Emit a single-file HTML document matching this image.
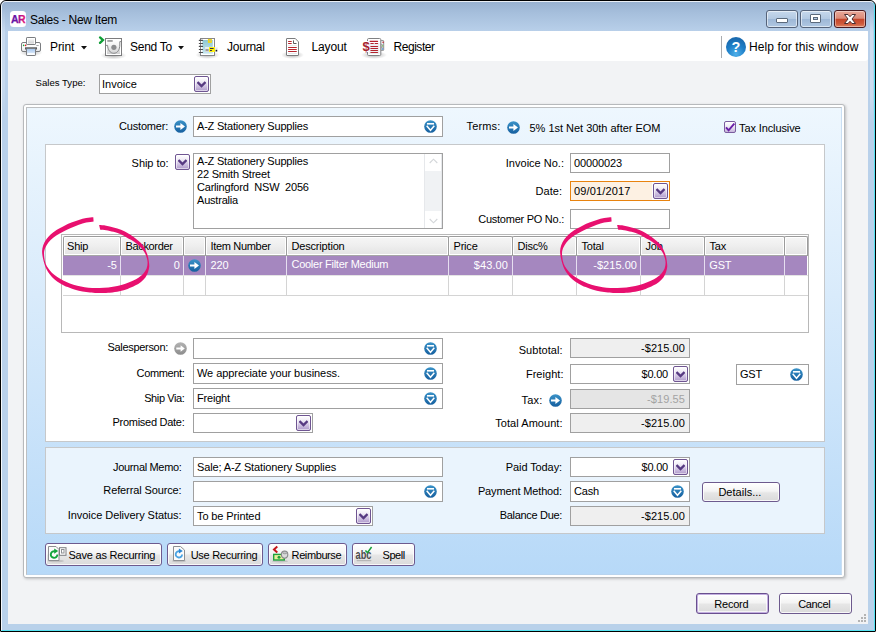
<!DOCTYPE html>
<html lang="en">
<head>
<meta charset="utf-8">
<title>Sales - New Item</title>
<style>
*{box-sizing:border-box;margin:0;padding:0}
html,body{width:876px;height:632px;overflow:hidden;background:#fff}
body{font-family:"Liberation Sans",sans-serif;font-size:12px;color:#000;position:relative}
.abs{position:absolute}
#win{position:absolute;left:0;top:0;width:876px;height:632px;border:1px solid #000;border-radius:6px 6px 1px 1px;
 background:linear-gradient(180deg,#98b1d0 0px,#a6bfdc 12px,#b9d0ea 31px,#b9d1ea 100%);overflow:hidden}
#glow{position:absolute;left:0;top:0;width:874px;height:630px;border:1px solid rgba(255,255,255,.85);border-top-color:rgba(255,255,255,.8);border-radius:5px 5px 0 0;border-right-color:#55e3f2;border-bottom-color:#55e3f2}
#client{position:absolute;left:7px;top:30px;width:860px;height:593px;background:#f2f3f5}
#toolbar{position:absolute;left:0;top:0;width:860px;height:30px;background:#fff;border-radius:1px 1px 3px 3px}
.tt{position:absolute;font-size:12px;color:#000;white-space:nowrap;line-height:16px}
.l{position:absolute;white-space:nowrap;font-size:11.5px;line-height:14px;text-align:right;color:#000}
.t{position:absolute;white-space:nowrap;font-size:11.5px;line-height:14px;color:#000}
.f{position:absolute;background:#fff;border:1px solid #a0a0a0}
.f.g{background:#efefef}
.f span{position:absolute;white-space:nowrap;font-size:11.5px;line-height:14px;top:2px}
.f span.r{right:4px}
.f span.lf{left:3px}
#outer{position:absolute;left:23px;top:104px;width:822px;height:474px;border:1px solid #b7b9bc;border-radius:3px;background:#fff;box-shadow:1px 1px 3px rgba(0,0,0,.22)}
#outer .in{position:absolute;left:2px;top:2px;right:2px;bottom:2px;border:1px solid #bdbfc2;border-right-color:#c9def3;border-bottom-color:#b9d4ee;background:linear-gradient(180deg,#eef7fe 0%,#d9ebfb 40%,#b7d9f8 100%)}
#p1{position:absolute;left:45px;top:144px;width:780px;height:298px;background:#fff;border:1px solid #c6c8ca}
#p2{position:absolute;left:45px;top:447px;width:780px;height:87px;background:#eaf4fd;border:1px solid #c6c8ca}

.wb{border:1px solid #55637a;border-radius:3px;background:linear-gradient(180deg,#c6d8ec 0%,#b3c9e2 48%,#9db7d6 50%,#b0c8e3 100%);box-shadow:inset 0 0 0 1px rgba(255,255,255,.55)}
.wb.cl{border-color:#4a1a20;background:linear-gradient(180deg,#e9a99a 0%,#dc8a78 46%,#c4452a 50%,#cf5a3c 80%,#de8464 100%);box-shadow:inset 0 0 0 1px rgba(255,255,255,.4)}

.l,.t,.f span{font-size:11px;letter-spacing:-0.2px}
.db{position:absolute;width:15px;height:16px;border:1px solid #6f5592;border-radius:2px;background:linear-gradient(180deg,#ffffff 0%,#f2eef7 30%,#d3c6e4 62%,#af9acb 100%);box-shadow:inset 0 0 0 1px rgba(255,255,255,.55)}
.db svg{position:absolute;left:2px;top:4px}
.ic{position:absolute;width:13px;height:13px}
.cb{position:absolute;width:12px;height:12px;border:1px solid #7a5c9e;background:linear-gradient(180deg,#ffffff 0%,#efe9f5 45%,#c7b6dc 100%);border-radius:2px}


#tbl{position:absolute;left:61px;top:234px;width:748px;height:99px;border:1px solid #b8b8b8;background:#fff;overflow:hidden}
#tbl .h{position:absolute;top:1px;height:20px;border:1px solid #9c9c9c;border-bottom-color:#a6a6a6;background:linear-gradient(180deg,#f6f6f6 0%,#efefef 45%,#e3e3e3 100%);box-shadow:inset 1px 1px 0 #fff,inset -1px -1px 0 #fff;font-size:11px;letter-spacing:-0.2px;line-height:14px;padding:2px 0 0 4.5px;white-space:nowrap;border-radius:2px 2px 0 0}
#tbl .r1{position:absolute;left:1px;top:21px;width:744px;height:19px;background:#a587bf}
#tbl .c{position:absolute;color:#fff;font-size:11px;letter-spacing:-0.2px;line-height:14px;white-space:nowrap}
#tbl .v{position:absolute;top:21px;width:1px;height:40px;background:linear-gradient(180deg,#e6def0 0,#e6def0 19px,#d4d4d4 19px,#d4d4d4 40px)}
#tbl .hl{position:absolute;left:1px;top:60px;width:745px;height:1px;background:#d4d4d4}
#tbl .hl0{position:absolute;left:1px;top:40px;width:745px;height:1px;background:#e4e4e4}

.btn{position:absolute;border:1px solid #6d5a8e;border-radius:3px;background:linear-gradient(180deg,#ffffff 0%,#f4f4f4 45%,#e6e6e6 55%,#dadada 100%);box-shadow:inset 0 0 0 1px rgba(255,255,255,.8)}
.btn span{position:absolute;white-space:nowrap;font-size:11px;line-height:14px}
.btn.def{border-color:#694f8f;box-shadow:inset 0 0 0 1px #c3afe0,inset 0 0 0 2px rgba(255,255,255,.7)}

.sb{position:absolute;left:230px;top:0;width:18px;height:74px;border-left:1px solid #e6e8eb;border-right:1px solid #e6e8eb;background:linear-gradient(180deg,#fff 0,#fff 17px,#f0f2f4 17px,#f0f2f4 57px,#fff 57px,#fff 74px)}
.sb svg{position:absolute;left:4px}
</style>
</head>
<body>
<div id="win">
 <div id="glow"></div>
 <div id="client">
  <div id="toolbar"></div>
 </div>
</div>
<div id="outer"><div class="in"></div></div>
<div id="p1"></div>
<div id="p2"></div>

<!-- title bar -->
<svg class="abs" style="left:10px;top:11px" width="16" height="16" viewBox="0 0 16 16">
 <defs><linearGradient id="arg" x1="0" x2="1" y1="0" y2="0"><stop offset="0" stop-color="#5a12a6"/><stop offset=".42" stop-color="#7413a3"/><stop offset=".62" stop-color="#b3158d"/><stop offset="1" stop-color="#ee1470"/></linearGradient></defs>
 <rect x="0" y="0" width="16" height="16" rx="3.500" fill="#fff"/>
 <text x="8" y="12.2" text-anchor="middle" font-family="Liberation Sans, sans-serif" font-weight="bold" font-size="10.5" letter-spacing="-0.6" fill="url(#arg)" stroke="url(#arg)" stroke-width=".25">AR</text>
</svg>
<div class="abs" style="left:30px;top:12px;font-size:12px;line-height:16px;white-space:nowrap;letter-spacing:-0.27px">Sales - New Item</div>
<div class="wb abs" style="left:766px;top:10px;width:32px;height:18px"><i style="position:absolute;left:9px;top:7px;width:12px;height:5px;background:#fff;border:1px solid #5b6a7c;border-radius:1px"></i></div>
<div class="wb abs" style="left:800px;top:10px;width:32px;height:18px"><i style="position:absolute;left:9px;top:3px;width:11px;height:9px;border:1px solid #5b6a7c;background:#fff;border-radius:1px"></i><i style="position:absolute;left:12px;top:6px;width:5px;height:3px;border:1px solid #5b6a7c;background:#b5cbe3"></i></div>
<div class="wb cl abs" style="left:834px;top:10px;width:32px;height:18px">
 <svg style="position:absolute;left:8px;top:2px" width="14" height="12" viewBox="0 0 14 12"><path d="M1.5 1.5 L5 1.5 L7 3.7 L9 1.5 L12.5 1.5 L9 6 L12.5 10.5 L9 10.5 L7 8.3 L5 10.5 L1.5 10.5 L5 6 Z" fill="#fff" stroke="#4a2f33" stroke-width="1" stroke-linejoin="round"/></svg>
</div>
<div class="abs" style="left:2px;top:8px;width:3px;height:110px;background:linear-gradient(180deg,rgba(255,255,255,.0) 0,rgba(255,255,255,.22) 25px,rgba(255,255,255,.2) 70%,rgba(255,255,255,0) 100%)"></div>
<div class="abs" style="left:870px;top:8px;width:3px;height:115px;background:linear-gradient(180deg,rgba(255,255,255,.0) 0,rgba(255,255,255,.3) 25px,rgba(255,255,255,.28) 75%,rgba(255,255,255,0) 100%)"></div>
<!--TITLE-->

<!-- toolbar -->
<svg class="abs" style="left:20px;top:36px" width="23" height="22" viewBox="0 0 23 22">
 <defs><linearGradient id="pg1" x1="0" x2="0" y1="0" y2="1"><stop offset="0" stop-color="#ffffff"/><stop offset=".55" stop-color="#fbfbfb"/><stop offset="1" stop-color="#e3e4e6"/></linearGradient>
 <linearGradient id="pg2" x1="0" x2="0" y1="0" y2="1"><stop offset="0" stop-color="#9fc3ee"/><stop offset=".7" stop-color="#dbe9f9"/><stop offset="1" stop-color="#ffffff"/></linearGradient>
 <linearGradient id="pg3" x1="0" x2="0" y1="0" y2="1"><stop offset="0" stop-color="#f4f4f4"/><stop offset="1" stop-color="#cfd0d2"/></linearGradient>
 <radialGradient id="psh" cx=".5" cy=".5" r=".5"><stop offset="0" stop-color="#000" stop-opacity=".28"/><stop offset="1" stop-color="#000" stop-opacity="0"/></radialGradient></defs>
 <ellipse cx="11" cy="16.500" rx="11.500" ry="4" fill="url(#psh)"/>
 <rect x="1.500" y="6.500" width="19" height="9" rx="1.500" fill="url(#pg1)" stroke="#7b7d80"/>
 <rect x="6.500" y="1.500" width="9" height="7" rx=".6" fill="#fff" stroke="#7b7d80"/>
 <rect x="8" y="3.200" width="6" height="4.300" fill="url(#pg3)"/>
 <rect x="5" y="11.300" width="12" height="2.200" fill="#55575a"/>
 <rect x="6.500" y="12.500" width="9" height="7" rx=".6" fill="url(#pg2)" stroke="#7b7d80"/>
 <rect x="7.500" y="17" width="7" height="2" fill="#fff" opacity=".8"/>
 <circle cx="3.600" cy="9.400" r=".8" fill="#18a83a"/><circle cx="5.600" cy="9.400" r=".8" fill="#e01b1b"/>
 <rect x="16.300" y="9" width="2.400" height="1" fill="#a6a8ab"/>
</svg>
<div class="tt" style="left:50px;top:39px;letter-spacing:-0.07px">Print</div>
<svg class="abs" style="left:81px;top:46px" width="6" height="4" viewBox="0 0 6 4"><path d="M0 0 H6 L3 3.600 Z" fill="#111"/></svg>
<svg class="abs" style="left:97px;top:35px" width="30" height="25" viewBox="0 0 30 25">
 <defs><linearGradient id="sg1" x1="0" x2="0" y1="0" y2="1"><stop offset="0" stop-color="#ffffff"/><stop offset=".35" stop-color="#f4f4f4"/><stop offset="1" stop-color="#cfcfd0"/></linearGradient>
 <radialGradient id="ssh" cx=".5" cy=".5" r=".5"><stop offset="0" stop-color="#000" stop-opacity=".3"/><stop offset="1" stop-color="#000" stop-opacity="0"/></radialGradient></defs>
 <ellipse cx="16.500" cy="20.500" rx="13" ry="4" fill="url(#ssh)"/>
 <path d="M3 2.400 L6 5.100 L3 7.900" fill="none" stroke="#0e9e35" stroke-width="2.300" stroke-linecap="round" stroke-linejoin="miter"/>
 <rect x="8.500" y="3.500" width="16" height="17" fill="#fff" stroke="#7c7c7e"/>
 <rect x="10" y="5" width="13" height="14" fill="url(#sg1)"/>
 <rect x="10.300" y="5.300" width="5.400" height="1.300" fill="#77787a"/>
 <path d="M9 10.400 H10.600 C10.800 14.500 13 18.300 16.800 18.300 C20.600 18.300 22.800 14.500 22.800 10 V6.600 H24" fill="none" stroke="#88898b" stroke-width="1"/>
 <circle cx="16.900" cy="12.300" r="2.600" fill="#8b8c8e"/>
</svg>
<div class="tt" style="left:130px;top:39px;letter-spacing:-0.26px">Send To</div>
<svg class="abs" style="left:178px;top:46px" width="6" height="4" viewBox="0 0 6 4"><path d="M0 0 H6 L3 3.600 Z" fill="#111"/></svg>
<svg class="abs" style="left:196px;top:35px" width="26" height="25" viewBox="0 0 26 25">
 <defs><linearGradient id="jg" x1="0" x2="0" y1="0" y2="1"><stop offset="0" stop-color="#8cc6d3"/><stop offset="1" stop-color="#c9e8f0"/></linearGradient>
 <linearGradient id="jg2" x1="0" x2="0" y1="0" y2="1"><stop offset="0" stop-color="#f4f4f4"/><stop offset="1" stop-color="#d2d3d5"/></linearGradient>
 <radialGradient id="jsh" cx=".5" cy=".5" r=".5"><stop offset="0" stop-color="#000" stop-opacity=".3"/><stop offset="1" stop-color="#000" stop-opacity="0"/></radialGradient></defs>
 <ellipse cx="11.500" cy="20" rx="12" ry="4" fill="url(#jsh)"/>
 <rect x="4.500" y="3.500" width="14" height="17" fill="#fff" stroke="#868789"/>
 <rect x="6.400" y="5" width="10.400" height="13.700" fill="url(#jg)"/>
 <g stroke="#4d4e50" stroke-width="1.100" stroke-linecap="round"><path d="M3.300 5.400 H6.600 M3.300 8.500 H6.600 M3.300 11.400 H6.600 M3.300 14.500 H6.600 M3.300 17.500 H6.600"/></g>
 <rect x="11.900" y="3.900" width="4" height="4" fill="#efd61c"/>
 <rect x="13.300" y="4.800" width="1.500" height="1.200" fill="#b9b49a"/>
 <rect x="9.100" y="12.100" width="12.600" height="4.800" fill="url(#jg2)"/>
 <rect x="9.600" y="14.500" width="3" height="1" fill="#55565a"/>
 <rect x="13" y="12.100" width="6" height="4.800" fill="#fff200"/>
 <rect x="14" y="13" width="3.600" height="1" fill="#2b2b55"/><rect x="14" y="15" width="1.900" height="1" fill="#2b2b55"/>
 <circle cx="20.400" cy="15.600" r=".85" fill="#1b1b1b"/>
</svg>
<div class="tt" style="left:227px;top:39px;letter-spacing:-0.24px">Journal</div>
<svg class="abs" style="left:282px;top:35px" width="24" height="25" viewBox="0 0 24 25">
 <defs><radialGradient id="lsh" cx=".5" cy=".5" r=".5"><stop offset="0" stop-color="#000" stop-opacity=".3"/><stop offset="1" stop-color="#000" stop-opacity="0"/></radialGradient></defs>
 <ellipse cx="10.500" cy="20" rx="11.500" ry="4" fill="url(#lsh)"/>
 <path d="M4.700 3.500 H13.300 L16.500 6.900 V20 Q16.500 20.500 16 20.500 H5 Q4.500 20.500 4.500 20 V3.700 Z" fill="#fff" stroke="#7b7c7e" stroke-width="1"/>
 <path d="M11.500 5.400 V8.500 H14.500" fill="none" stroke="#5b5c5e" stroke-width="1"/>
 <g fill="#b8262e"><rect x="6" y="6" width="3.800" height="1.100" rx=".5"/><rect x="6" y="8" width="3.800" height="1.100" rx=".5"/><rect x="6" y="12" width="8.900" height="1.100" rx=".5"/><rect x="6" y="14" width="8.900" height="1.100" rx=".5"/><rect x="6" y="16" width="8.900" height="1.100" rx=".5"/></g>
 <g fill="#e3e6e8"><rect x="6" y="10.200" width="8.900" height=".9"/><rect x="6" y="18" width="8.900" height=".9"/></g>
</svg>
<div class="tt" style="left:311.500px;top:39px;letter-spacing:-0.13px">Layout</div>
<svg class="abs" style="left:360px;top:35px" width="28" height="25" viewBox="0 0 28 25">
 <defs><radialGradient id="rsh" cx=".5" cy=".5" r=".5"><stop offset="0" stop-color="#000" stop-opacity=".3"/><stop offset="1" stop-color="#000" stop-opacity="0"/></radialGradient></defs>
 <ellipse cx="14" cy="20" rx="13" ry="4" fill="url(#rsh)"/>
 <rect x="20.500" y="5.500" width="3.200" height="10" rx=".8" fill="#f4f4f5" stroke="#8b8c8e"/>
 <rect x="21.500" y="9.300" width="1.600" height="2.600" fill="#fff" stroke="#9a9b9d" stroke-width=".5"/><rect x="21.500" y="12.600" width="1.600" height="2.600" fill="#fff" stroke="#9a9b9d" stroke-width=".5"/>
 <circle cx="23.100" cy="7.300" r=".8" fill="#c5202a"/><rect x="22.200" y="10" width="1" height="1.600" fill="#6fbf5a"/><rect x="22.200" y="13.200" width="1" height="1.600" fill="#2f86d6"/>
 <rect x="7.500" y="3.500" width="13.300" height="17" rx="1.200" fill="#fff" stroke="#808183"/>
 <rect x="8.500" y="8" width="11" height="11" fill="#eef0f1"/>
 <g fill="#b3242e"><rect x="9.300" y="5.800" width="8.800" height="1.100" rx=".5"/><rect x="10.300" y="8" width="3.500" height="1.100" rx=".5"/><rect x="14.600" y="8" width="3.500" height="1.100" rx=".5"/><rect x="10.300" y="10.900" width="7.800" height="1.100" rx=".5"/><rect x="10.300" y="13" width="7.800" height="1.100" rx=".5"/><rect x="10.300" y="15" width="7.800" height="1.100" rx=".5"/><rect x="10.300" y="17" width="7.800" height="1.100" rx=".5"/></g>
 <rect x="6.500" y="6" width="3" height="11" fill="#fff"/>
 <text x="6.200" y="15.700" text-anchor="middle" font-family="Liberation Sans, sans-serif" font-weight="bold" font-size="13" fill="#a6232f">$</text>
</svg>
<div class="tt" style="left:393.500px;top:39px;letter-spacing:-0.46px">Register</div>
<div class="abs" style="left:721px;top:36px;width:1px;height:22px;background:#a9acb0"></div>
<svg class="abs" style="left:726px;top:37px" width="20" height="20" viewBox="0 0 20 20">
 <defs><radialGradient id="hg" cx=".5" cy=".85" r=".75"><stop offset="0" stop-color="#4fb0ea"/><stop offset=".6" stop-color="#1e7fc8"/><stop offset="1" stop-color="#1a6bb0"/></radialGradient></defs>
 <circle cx="10" cy="10" r="10" fill="url(#hg)"/>
 <text x="10" y="15.200" text-anchor="middle" font-family="Liberation Sans, sans-serif" font-weight="bold" font-size="14.500" fill="#fff">?</text>
</svg>
<div class="tt" style="left:749px;top:39px;letter-spacing:0.11px">Help for this window</div>
<!--TOOLBAR-->

<svg width="0" height="0" style="position:absolute">
 <defs>
  <linearGradient id="bl" x1="0" x2="0" y1="0" y2="1"><stop offset="0" stop-color="#3b93c8"/><stop offset="1" stop-color="#155f9f"/></linearGradient>
  <linearGradient id="gr" x1="0" x2="0" y1="0" y2="1"><stop offset="0" stop-color="#b4b4b4"/><stop offset="1" stop-color="#8c8c8c"/></linearGradient>
  <symbol id="arr" viewBox="0 0 13 13"><circle cx="6.500" cy="6.500" r="6.300" fill="url(#bl)"/><path d="M2 5.500 H6.400 V2.900 L11 6.500 L6.400 10.100 V7.500 H2 Z" fill="#fff"/></symbol>
  <symbol id="arrg" viewBox="0 0 13 13"><circle cx="6.500" cy="6.500" r="6.300" fill="url(#gr)"/><path d="M2.300 5.600 H6.600 V3.200 L10.800 6.500 L6.600 9.800 V7.400 H2.300 Z" fill="#fff"/></symbol>
  <symbol id="dd" viewBox="0 0 13 13"><circle cx="6.500" cy="6.500" r="6.300" fill="url(#bl)"/><path d="M3 3 H10 V4.600 H3 Z" fill="#fff"/><path d="M2.700 5.800 L6.500 10.300 L10.300 5.800" fill="none" stroke="#fff" stroke-width="1.500" stroke-linejoin="miter"/></symbol>
  <symbol id="chev" viewBox="0 0 9 7"><path d="M0.500 1 L4.500 5 L8.500 1" fill="none" stroke="#573a82" stroke-width="2.300" stroke-linejoin="miter"/></symbol>
 </defs>
</svg>
<div class="l" style="right:790.5px;top:76px;font-size:9.6px;letter-spacing:0">Sales Type:</div>
<div class="f " style="left:99px;top:74px;width:112px;height:20px;"><span class="lf" style="left:2px;letter-spacing:0.02px">Invoice</span></div>
<div class="db" style="left:194px;top:76px"><svg width="9" height="7"><use href="#chev"/></svg></div>
<div class="l" style="right:708px;top:119px;">Customer:</div>
<svg class="ic" style="left:174.0px;top:120.0px"><use href="#arr"/></svg>
<div class="f " style="left:193px;top:116px;width:250px;height:21px;"><span class="lf" style="">A-Z Stationery Supplies</span></div>
<svg class="ic" style="left:424.0px;top:120.0px"><use href="#dd"/></svg>
<div class="t" style="left:466.5px;top:119px;letter-spacing:0.15px">Terms:</div>
<svg class="ic" style="left:507.3px;top:121px"><use href="#arr"/></svg>
<div class="t" style="left:529.5px;top:121px;letter-spacing:-0.02px">5% 1st Net 30th after EOM</div>
<div class="cb" style="left:724px;top:121px"><svg width="10" height="10" viewBox="0 0 10 10" style="position:absolute;left:0;top:0"><path d="M1 5.300 L3.600 8.300 L9.300 1.500" fill="none" stroke="#6a1fa8" stroke-width="1.900"/></svg></div>
<div class="t" style="left:739px;top:121px;letter-spacing:-0.11px">Tax Inclusive</div>
<div class="l" style="right:707.5px;top:156px;letter-spacing:-0.05px">Ship to:</div>
<div class="db" style="left:175px;top:154px"><svg width="9" height="7"><use href="#chev"/></svg></div>
<div class="f" style="left:193px;top:153px;width:250px;height:76px"><div style="position:absolute;left:3px;top:1px;font-size:11px;letter-spacing:-0.2px;line-height:13px;white-space:pre">A-Z Stationery Supplies
22 Smith Street
Carlingford  NSW  2056
Australia</div><div class="sb"><svg style="top:4px" width="9" height="6" viewBox="0 0 9 6"><path d="M0.700 5 L4.500 1.200 L8.300 5" fill="none" stroke="#d3d6d9" stroke-width="1.100"/></svg><svg style="top:64px" width="9" height="6" viewBox="0 0 9 6"><path d="M0.700 1 L4.500 4.800 L8.300 1" fill="none" stroke="#d3d6d9" stroke-width="1.100"/></svg></div></div>
<div class="l" style="right:312px;top:156px;letter-spacing:0.01px">Invoice No.:</div>
<div class="f " style="left:570px;top:153px;width:100px;height:20px;"><span class="lf" style="letter-spacing:-0.12px">00000023</span></div>
<div class="l" style="right:314px;top:184px;letter-spacing:0.02px">Date:</div>
<div class="f " style="left:570px;top:181px;width:100px;height:20px;border-color:#e8830f;background:linear-gradient(90deg,#fdf1e3 0,#fdf1e3 81px,#fff 81px)"><span class="lf" style="letter-spacing:0.14px">09/01/2017</span></div>
<div class="db" style="left:653px;top:183px"><svg width="9" height="7"><use href="#chev"/></svg></div>
<div class="l" style="right:312px;top:212px;letter-spacing:-0.26px">Customer PO No.:</div>
<div class="f " style="left:570px;top:209px;width:100px;height:20px;"></div>
<div class="l" style="right:708px;top:340px;letter-spacing:-0.31px">Salesperson:</div>
<svg class="ic" style="left:174.2px;top:341.8px"><use href="#arrg"/></svg>
<div class="f " style="left:193px;top:338px;width:250px;height:21px;"></div>
<svg class="ic" style="left:424.0px;top:342.0px"><use href="#dd"/></svg>
<div class="l" style="right:691.5px;top:366px;letter-spacing:-0.35px">Comment:</div>
<div class="f " style="left:193px;top:363px;width:250px;height:21px;"><span class="lf" style="letter-spacing:-0.06px">We appreciate your business.</span></div>
<svg class="ic" style="left:424.0px;top:367.0px"><use href="#dd"/></svg>
<div class="l" style="right:691.5px;top:391px;letter-spacing:-0.39px">Ship Via:</div>
<div class="f " style="left:193px;top:388px;width:250px;height:21px;"><span class="lf" style="">Freight</span></div>
<svg class="ic" style="left:424.0px;top:392.0px"><use href="#dd"/></svg>
<div class="l" style="right:691.5px;top:415px;letter-spacing:-0.27px">Promised Date:</div>
<div class="f " style="left:193px;top:413px;width:120px;height:20px;"></div>
<div class="db" style="left:296px;top:415px"><svg width="9" height="7"><use href="#chev"/></svg></div>
<div class="l" style="right:313.5px;top:343px;letter-spacing:0.04px">Subtotal:</div>
<div class="f g" style="left:570px;top:338px;width:120px;height:20px;"><span class="r" style="letter-spacing:0.07px">-$215.00</span></div>
<div class="l" style="right:312.5px;top:367px;letter-spacing:0.04px">Freight:</div>
<div class="f " style="left:570px;top:364px;width:120px;height:20px;"><span class="r" style="right:21px">$0.00</span></div>
<div class="db" style="left:673px;top:366px"><svg width="9" height="7"><use href="#chev"/></svg></div>
<div class="f " style="left:736px;top:364px;width:73px;height:21px;"><span class="lf" style="">GST</span></div>
<svg class="ic" style="left:790.0px;top:368.0px"><use href="#dd"/></svg>
<div class="l" style="right:333.5px;top:392.5px;letter-spacing:0.18px">Tax:</div>
<svg class="ic" style="left:548.8px;top:393.8px"><use href="#arr"/></svg>
<div class="f g" style="left:570px;top:389px;width:120px;height:20px;background:#e5e5e5"><span class="r" style="color:#a3a3a3;letter-spacing:0.1px">-$19.55</span></div>
<div class="l" style="right:313.5px;top:416px;letter-spacing:0.04px">Total Amount:</div>
<div class="f g" style="left:570px;top:413px;width:120px;height:20px;"><span class="r" style="letter-spacing:0.07px">-$215.00</span></div>
<!--FORM-->
<div id="tbl">
<div class="r1"></div>
<div class="h" style="left:1px;width:58px;padding-left:3px">Ship</div>
<div class="h" style="left:58px;width:64px;letter-spacing:-0.34px">Backorder</div>
<div class="h" style="left:121px;width:23px"></div>
<div class="h" style="left:143px;width:82px;letter-spacing:-0.32px">Item Number</div>
<div class="h" style="left:224px;width:163px;letter-spacing:-0.18px">Description</div>
<div class="h" style="left:386px;width:65px">Price</div>
<div class="h" style="left:450px;width:65px">Disc%</div>
<div class="h" style="left:514px;width:65px">Total</div>
<div class="h" style="left:578px;width:65px">Job</div>
<div class="h" style="left:642px;width:81px">Tax</div>
<div class="h" style="left:722px;width:24px"></div>
<div class="v" style="left:58px"></div>
<div class="v" style="left:121px"></div>
<div class="v" style="left:143px"></div>
<div class="v" style="left:224px"></div>
<div class="v" style="left:386px"></div>
<div class="v" style="left:450px"></div>
<div class="v" style="left:514px"></div>
<div class="v" style="left:578px"></div>
<div class="v" style="left:642px"></div>
<div class="v" style="left:722px"></div>
<div class="hl0"></div><div class="hl"></div>
<div class="c" style="right:691.4px;top:23px">-5</div>
<div class="c" style="right:628.3px;top:23px">0</div>
<div class="c" style="left:148.6px;top:23px">220</div>
<div class="c" style="left:229.5px;top:22px;letter-spacing:-0.27px">Cooler Filter Medium</div>
<div class="c" style="right:300px;top:23px;letter-spacing:0.1px">$43.00</div>
<div class="c" style="right:171px;top:23px;letter-spacing:0.05px">-$215.00</div>
<div class="c" style="left:647.3px;top:23px">GST</div>
<svg class="ic" style="left:126.2px;top:23.5px"><use href="#arr"/></svg>
</div>
<!--TABLE-->
<div class="l" style="right:694.5px;top:459.5px;letter-spacing:-0.33px">Journal Memo:</div>
<div class="f " style="left:193px;top:457px;width:250px;height:20px;"><span class="lf" style="letter-spacing:-0.14px">Sale; A-Z Stationery Supplies</span></div>
<div class="l" style="right:694.5px;top:483px;letter-spacing:-0.12px">Referral Source:</div>
<div class="f " style="left:193px;top:481px;width:250px;height:21px;"></div>
<svg class="ic" style="left:424.2px;top:485.1px"><use href="#dd"/></svg>
<div class="l" style="right:694.5px;top:508px;letter-spacing:-0.05px">Invoice Delivery Status:</div>
<div class="f " style="left:193px;top:506px;width:180px;height:20px;"><span class="lf" style="letter-spacing:-0.11px">To be Printed</span></div>
<div class="db" style="left:356px;top:508px"><svg width="9" height="7"><use href="#chev"/></svg></div>
<div class="l" style="right:314px;top:459.5px;letter-spacing:-0.1px">Paid Today:</div>
<div class="f " style="left:570px;top:457px;width:120px;height:20px;"><span class="r" style="right:21px;letter-spacing:-0.2px">$0.00</span></div>
<div class="db" style="left:673px;top:459px"><svg width="9" height="7"><use href="#chev"/></svg></div>
<div class="l" style="right:314px;top:484px;letter-spacing:-0.14px">Payment Method:</div>
<div class="f " style="left:570px;top:481px;width:120px;height:21px;"><span class="lf" style="letter-spacing:-0.2px">Cash</span></div>
<svg class="ic" style="left:671.2px;top:485.1px"><use href="#dd"/></svg>
<div class="l" style="right:314px;top:508px;letter-spacing:-0.32px">Balance Due:</div>
<div class="f g" style="left:570px;top:506px;width:120px;height:20px;"><span class="r" style="letter-spacing:0.07px">-$215.00</span></div>
<div class="btn " style="left:702px;top:482px;width:78px;height:20px"><span style="left:15.4px;top:1.6px;letter-spacing:0.02px">Details...</span></div>
<div class="btn " style="left:45px;top:543px;width:117px;height:23px"><span style="left:22.5px;top:4.3px;letter-spacing:-0.22px">Save as Recurring</span></div>
<div class="btn " style="left:167px;top:543px;width:96px;height:23px"><span style="left:22.7px;top:4.3px;letter-spacing:-0.28px">Use Recurring</span></div>
<div class="btn " style="left:268px;top:543px;width:79px;height:23px"><span style="left:22.6px;top:4.3px;letter-spacing:-0.4px">Reimburse</span></div>
<div class="btn " style="left:352px;top:543px;width:63px;height:23px"><span style="left:29.5px;top:4.3px;letter-spacing:-0.45px">Spell</span></div>
<div class="btn def" style="left:696px;top:593px;width:73px;height:21px"><span style="left:17.3px;top:2.8px;letter-spacing:-0.24px">Record</span></div>
<div class="btn " style="left:779px;top:593px;width:73px;height:21px"><span style="left:18.2px;top:2.8px;letter-spacing:-0.37px">Cancel</span></div>

<!-- button icons -->
<svg class="abs" style="left:47px;top:545px" width="20" height="18" viewBox="0 0 20 18">
 <ellipse cx="9" cy="16" rx="8" ry="1.300" fill="#000" opacity=".13"/>
 <path d="M1.500 1.500 H9 L12 4.500 V15.500 H1.500 Z" fill="#fbfbfb" stroke="#8d8f92"/>
 <path d="M10.400 9.600 A3.300 3.300 0 1 1 7.800 6.300" fill="none" stroke="#12a53c" stroke-width="1.900"/>
 <path d="M7.200 3.400 L11.200 6.100 L7.200 8.800 Z" fill="#12a53c"/>
 <rect x="12.500" y="2.700" width="6.500" height="7.600" fill="#fdfdfd" stroke="#7c7e81"/>
 <rect x="14.500" y="4.500" width="2.500" height="3.500" fill="#fdfdfd" stroke="#8f9194" stroke-width="1"/>
</svg>
<svg class="abs" style="left:172px;top:545px" width="15" height="18" viewBox="0 0 15 18">
 <ellipse cx="7" cy="16" rx="7" ry="1.300" fill="#000" opacity=".13"/>
 <path d="M1.500 1.500 H8.500 L12.500 5 V15.500 H1.500 Z" fill="#fbfbfb" stroke="#8d8f92"/>
 <path d="M10.100 9.400 A3.200 3.200 0 1 1 7.600 6.200" fill="none" stroke="#4ba3e2" stroke-width="1.800"/>
 <path d="M6.900 3.400 L10.800 6 L6.900 8.600 Z" fill="#2a86d3"/>
</svg>
<svg class="abs" style="left:272px;top:545px" width="18" height="18" viewBox="0 0 18 18">
 <ellipse cx="8" cy="16.200" rx="8" ry="1.200" fill="#000" opacity=".13"/>
 <path d="M5.300 1.600 L2 4.500 L5.300 7.400" fill="none" stroke="#c4161c" stroke-width="2"/>
 <rect x="1.700" y="9.400" width="10.600" height="5.600" fill="#e8ef9a" stroke="#1fa23c" stroke-width="1.400"/>
 <circle cx="7" cy="12.200" r="1.500" fill="#1fa23c"/>
 <ellipse cx="12.600" cy="9.600" rx="3.200" ry="3.600" fill="#d9dadb" stroke="#88898b" stroke-width="1.100"/>
 <ellipse cx="12.800" cy="7.600" rx="2.200" ry="1.200" fill="#c2c3c5" stroke="#88898b" stroke-width=".7"/>
</svg>
<svg class="abs" style="left:355px;top:545px" width="20" height="18" viewBox="0 0 20 18">
 <rect x="1.500" y="15" width="15" height="1.200" rx=".6" fill="#000" opacity=".18"/>
 <text x="0.600" y="13.500" font-family="Liberation Sans, sans-serif" font-weight="bold" font-size="12" fill="#4c4c4c" textLength="15.800" lengthAdjust="spacingAndGlyphs">abc</text>
 <path d="M10.400 5.400 L12.500 7.600 L16.600 2" fill="none" stroke="#17a03a" stroke-width="1.500"/>
</svg>
<!-- resize grip -->
<svg class="abs" style="left:858px;top:614px" width="8" height="8" viewBox="0 0 8 8"><g fill="#b3b3b3"><rect x="6" y="0" width="2" height="2"/><rect x="3" y="3" width="2" height="2"/><rect x="6" y="3" width="2" height="2"/><rect x="0" y="6" width="2" height="2"/><rect x="3" y="6" width="2" height="2"/><rect x="6" y="6" width="2" height="2"/></g></svg>
<!--BOTTOM-->
<svg class="abs" style="left:0;top:0;pointer-events:none" width="876" height="632" viewBox="0 0 876 632">
<path d="M93.3 217.3 C92.1 217.4 88.6 217.7 86.2 218.1 C83.8 218.5 81.3 219.2 78.8 219.9 C76.3 220.6 73.9 221.5 71.4 222.5 C68.9 223.5 66.5 224.7 64.0 225.9 C61.5 227.1 58.7 228.5 56.5 229.9 C54.3 231.3 52.3 232.8 50.6 234.4 C48.9 236.0 47.4 237.8 46.2 239.6 C45.0 241.4 43.9 243.3 43.2 245.2 C42.5 247.1 42.2 249.1 42.1 251.1 C42.0 253.1 42.4 255.3 42.8 257.4 C43.2 259.4 43.7 261.4 44.3 263.4 C44.9 265.4 45.6 267.4 46.5 269.3 C47.4 271.2 48.6 272.8 49.9 274.5 C51.2 276.2 52.6 277.8 54.3 279.3 C56.0 280.8 58.1 282.1 60.3 283.4 C62.5 284.7 65.2 286.1 67.7 287.1 C70.2 288.2 72.6 289.0 75.1 289.7 C77.6 290.4 80.0 290.9 82.5 291.4 C85.0 291.8 87.4 292.1 89.9 292.4 C92.4 292.6 94.0 292.8 97.3 292.9 C100.6 292.9 106.1 293.0 109.8 292.7 C113.5 292.4 116.5 291.8 119.5 291.2 C122.5 290.6 125.0 289.8 127.6 288.9 C130.2 288.0 132.9 286.8 135.1 285.6 C137.3 284.4 139.3 283.3 141.0 281.9 C142.7 280.5 144.2 279.0 145.4 277.4 C146.6 275.8 147.4 274.0 148.0 272.3 C148.6 270.6 149.0 268.6 149.2 267.0 C149.4 265.4 149.2 264.3 149.0 262.8 C148.8 261.3 148.7 259.6 148.3 258.0 C148.0 256.4 147.4 254.7 146.9 253.3 C146.4 251.9 146.0 250.9 145.3 249.5 C144.6 248.1 143.7 246.2 142.5 244.7 C141.3 243.2 139.6 241.8 138.0 240.5 C136.4 239.2 134.8 237.8 133.0 236.6 C131.2 235.3 129.5 234.1 127.5 233.0 C125.5 231.9 123.3 230.7 121.0 229.8 C118.7 228.9 116.0 228.1 113.5 227.4 C111.0 226.7 108.5 226.1 106.1 225.7 C103.7 225.3 100.3 225.2 99.1 225.1 L100.2 229.7 C101.2 229.8 103.9 229.8 106.1 230.2 C108.3 230.5 111.2 231.2 113.5 231.8 C115.8 232.4 118.1 233.1 120.2 234.0 C122.3 234.9 124.4 236.2 126.2 237.2 C128.0 238.2 129.6 239.0 131.0 239.8 C132.4 240.7 133.5 241.3 134.8 242.3 C136.1 243.3 137.3 244.4 138.6 245.6 C139.9 246.8 141.3 248.3 142.4 249.6 C143.5 250.9 144.3 251.9 145.0 253.3 C145.7 254.7 146.4 256.4 146.8 258.0 C147.2 259.6 147.6 261.1 147.6 262.8 C147.6 264.6 147.3 266.7 146.6 268.5 C145.9 270.3 144.5 272.2 143.2 273.7 C141.9 275.2 140.5 276.2 138.8 277.4 C137.1 278.6 135.0 279.7 132.8 280.8 C130.6 281.9 128.0 282.9 125.4 283.8 C122.8 284.7 120.1 285.4 117.3 286.0 C114.5 286.6 111.4 287.2 108.4 287.5 C105.5 287.8 102.3 287.9 99.6 288.0 C96.9 288.1 94.7 288.1 92.2 288.0 C89.7 287.9 87.2 287.6 84.7 287.2 C82.2 286.8 79.8 286.4 77.3 285.8 C74.8 285.2 72.2 284.3 69.9 283.4 C67.6 282.5 65.3 281.4 63.2 280.4 C61.1 279.3 59.1 278.3 57.3 277.1 C55.4 275.9 53.6 274.4 52.1 273.0 C50.6 271.6 49.5 270.1 48.4 268.5 C47.3 266.9 46.3 265.2 45.6 263.4 C44.9 261.5 44.5 259.4 44.3 257.4 C44.1 255.3 43.8 253.1 44.2 251.1 C44.6 249.1 45.5 247.0 46.6 245.2 C47.7 243.3 49.0 241.6 50.6 240.0 C52.2 238.4 54.1 236.9 56.3 235.5 C58.4 234.1 61.0 232.7 63.5 231.4 C66.0 230.1 68.9 228.8 71.4 227.7 C74.0 226.6 76.3 225.7 78.8 224.8 C81.3 223.9 83.7 223.1 86.2 222.5 C88.7 221.9 92.4 221.6 93.6 221.4 Z" fill="#e8106f"/>
<path d="M611.3 217.3 C610.1 217.4 606.6 217.7 604.2 218.1 C601.8 218.5 599.3 219.2 596.8 219.9 C594.3 220.6 591.9 221.5 589.4 222.5 C586.9 223.5 584.5 224.7 582.0 225.9 C579.5 227.1 576.7 228.5 574.5 229.9 C572.3 231.3 570.3 232.8 568.6 234.4 C566.9 236.0 565.4 237.8 564.2 239.6 C563.0 241.4 561.9 243.3 561.2 245.2 C560.5 247.1 560.2 249.1 560.1 251.1 C560.0 253.1 560.4 255.3 560.8 257.4 C561.2 259.4 561.7 261.4 562.3 263.4 C562.9 265.4 563.6 267.4 564.5 269.3 C565.4 271.2 566.6 272.8 567.9 274.5 C569.2 276.2 570.6 277.8 572.3 279.3 C574.0 280.8 576.1 282.1 578.3 283.4 C580.5 284.7 583.2 286.1 585.7 287.1 C588.2 288.2 590.6 289.0 593.1 289.7 C595.6 290.4 598.0 290.9 600.5 291.4 C603.0 291.8 605.4 292.1 607.9 292.4 C610.4 292.6 612.0 292.8 615.3 292.9 C618.6 292.9 624.1 293.0 627.8 292.7 C631.5 292.4 634.5 291.8 637.5 291.2 C640.5 290.6 643.0 289.8 645.6 288.9 C648.2 288.0 650.9 286.8 653.1 285.6 C655.3 284.4 657.3 283.3 659.0 281.9 C660.7 280.5 662.2 279.0 663.4 277.4 C664.6 275.8 665.4 274.0 666.0 272.3 C666.6 270.6 667.0 268.6 667.2 267.0 C667.4 265.4 667.1 264.3 667.0 262.8 C666.9 261.3 666.6 259.6 666.3 258.0 C665.9 256.4 665.4 254.7 664.9 253.3 C664.4 251.9 664.0 250.9 663.3 249.5 C662.6 248.1 661.7 246.2 660.5 244.7 C659.3 243.2 657.6 241.8 656.0 240.5 C654.4 239.2 652.8 237.8 651.0 236.6 C649.2 235.3 647.5 234.1 645.5 233.0 C643.5 231.9 641.3 230.7 639.0 229.8 C636.7 228.9 634.0 228.1 631.5 227.4 C629.0 226.7 626.5 226.1 624.1 225.7 C621.7 225.3 618.3 225.2 617.1 225.1 L618.2 229.7 C619.2 229.8 621.9 229.8 624.1 230.2 C626.3 230.5 629.1 231.2 631.5 231.8 C633.9 232.4 636.1 233.1 638.2 234.0 C640.3 234.9 642.4 236.2 644.2 237.2 C646.0 238.2 647.6 239.0 649.0 239.8 C650.4 240.7 651.5 241.3 652.8 242.3 C654.1 243.3 655.3 244.4 656.6 245.6 C657.9 246.8 659.3 248.3 660.4 249.6 C661.5 250.9 662.3 251.9 663.0 253.3 C663.7 254.7 664.4 256.4 664.8 258.0 C665.2 259.6 665.6 261.1 665.6 262.8 C665.6 264.6 665.3 266.7 664.6 268.5 C663.9 270.3 662.5 272.2 661.2 273.7 C659.9 275.2 658.5 276.2 656.8 277.4 C655.1 278.6 653.0 279.7 650.8 280.8 C648.6 281.9 646.0 282.9 643.4 283.8 C640.8 284.7 638.1 285.4 635.3 286.0 C632.5 286.6 629.3 287.2 626.4 287.5 C623.5 287.8 620.3 287.9 617.6 288.0 C614.9 288.1 612.7 288.1 610.2 288.0 C607.7 287.9 605.2 287.6 602.7 287.2 C600.2 286.8 597.8 286.4 595.3 285.8 C592.8 285.2 590.2 284.3 587.9 283.4 C585.5 282.5 583.3 281.4 581.2 280.4 C579.1 279.3 577.1 278.3 575.3 277.1 C573.4 275.9 571.6 274.4 570.1 273.0 C568.6 271.6 567.5 270.1 566.4 268.5 C565.3 266.9 564.3 265.2 563.6 263.4 C562.9 261.5 562.5 259.4 562.3 257.4 C562.1 255.3 561.8 253.1 562.2 251.1 C562.6 249.1 563.5 247.0 564.6 245.2 C565.7 243.3 567.0 241.6 568.6 240.0 C570.2 238.4 572.1 236.9 574.3 235.5 C576.4 234.1 579.0 232.7 581.5 231.4 C584.0 230.1 586.9 228.8 589.4 227.7 C591.9 226.6 594.3 225.7 596.8 224.8 C599.3 223.9 601.7 223.1 604.2 222.5 C606.7 221.9 610.4 221.6 611.6 221.4 Z" fill="#e8106f"/>
</svg>
<!--ANNOT-->
</body>
</html>
